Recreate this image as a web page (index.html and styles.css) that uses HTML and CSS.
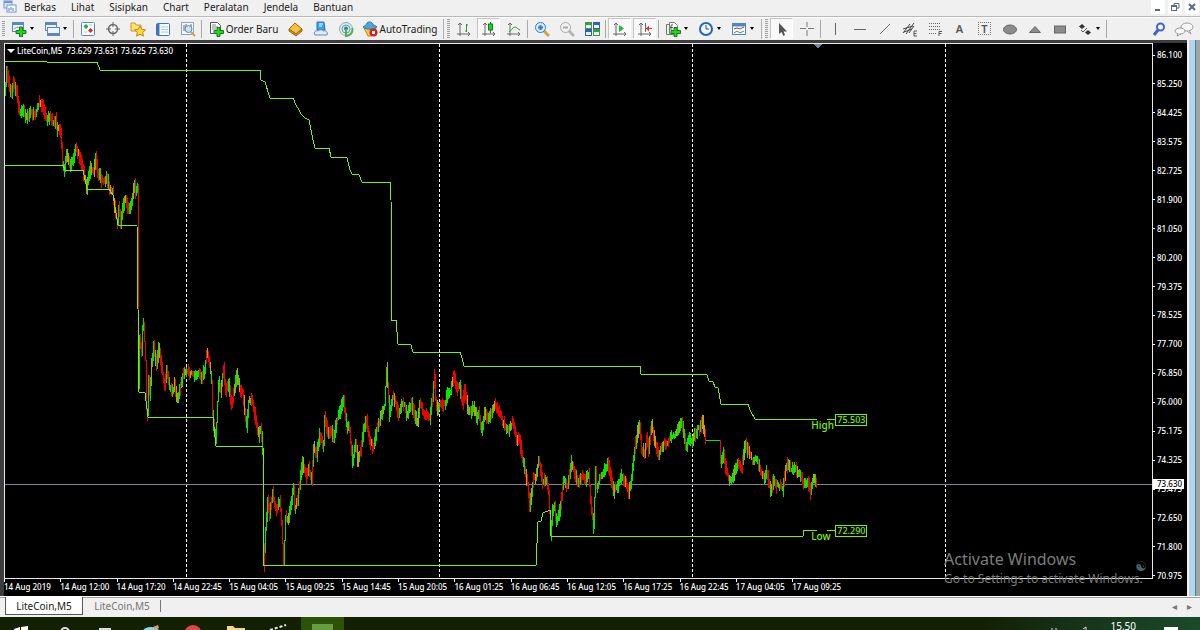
FILE: index.html
```
<!DOCTYPE html>
<html lang="id">
<head>
    <meta charset="UTF-8">
    <meta name="viewport" content="width=device-width, initial-scale=1.0">
    <title>LiteCoin,M5</title>
    <link rel="stylesheet" href="styles.css">
</head>
<body>
    <nav class="menubar">
        <svg class="app-icon" viewBox="0 0 14 14"><rect x="1" y="1" width="8" height="7" fill="#dbe8fb" stroke="#6d95d6"/><path d="M1 2h8" stroke="#6d95d6" stroke-width="2"/><rect x="4" y="5" width="9" height="7" fill="#fff" stroke="#6d95d6"/><path d="M6 11V8M8 10V7M10 11V8" stroke="#4b7bd0"/></svg>
        <button>Berkas</button>
        <button>Lihat</button>
        <button>Sisipkan</button>
        <button>Chart</button>
        <button>Peralatan</button>
        <button>Jendela</button>
        <button>Bantuan</button>
        <div class="window-buttons">
            <button aria-label="Minimize"><svg viewBox="0 0 10 10"><path d="M2 8h5" stroke="#5a6b85" stroke-width="2"/></svg></button>
            <button aria-label="Restore"><svg viewBox="0 0 10 10"><path d="M4 3V1.500h5V6H7" fill="none" stroke="#5a6b85"/><rect x="1.500" y="4" width="5" height="4.500" fill="none" stroke="#5a6b85"/><path d="M1 4h6" stroke="#5a6b85" stroke-width="2"/></svg></button>
            <button aria-label="Close"><svg viewBox="0 0 10 10"><path d="M2 2l6 6M8 2L2 8" stroke="#5a6b85" stroke-width="2"/></svg></button>
        </div>
    </nav>

    <div class="toolbar">
        <span class="grip"></span>
        <button class="tool drop" aria-label="New chart"><svg viewBox="0 0 16 16"><rect x="1.500" y="1.500" width="11" height="9" fill="#eef5fd" stroke="#5b87bb"/><path d="M1 3h12" stroke="#5b87bb" stroke-width="2"/><path d="M3 8l3-2 2 1" fill="none" stroke="#7aa"/><path d="M8.500 9.500V6h3v3.500H15v3h-3.500V16h-3v-3.500H5v-3z" fill="#25d02b" stroke="#0b8412"/></svg></button>
        <button class="tool drop" aria-label="Profiles"><svg viewBox="0 0 16 16"><rect x="1.500" y="1.500" width="11" height="8" fill="#eef5fd" stroke="#5b87bb"/><path d="M1 3h12" stroke="#5b87bb" stroke-width="2"/><rect x="3.500" y="6.500" width="12" height="8" fill="#eef5fd" stroke="#5b87bb"/><path d="M4 13h11" stroke="#5b87bb" stroke-width="2"/></svg></button>
        <span class="sep"></span>
        <button class="tool" aria-label="Market watch"><svg viewBox="0 0 16 16"><rect x="1.500" y="1.500" width="13" height="13" rx="1" fill="#fff" stroke="#4e8bd0"/><path d="M6 3l2.500 2.500L6 8 3.500 5.500z" fill="#1bab3b"/><path d="M10.500 7l2.500 2.500-2.500 2.500L8 9.500z" fill="#e02b20"/><path d="M4 11h3M9 4h3" stroke="#bbb"/></svg></button>
        <button class="tool" aria-label="Data window"><svg viewBox="0 0 16 16"><circle cx="8" cy="8" r="4.500" fill="none" stroke="#666" stroke-width="1.500"/><path d="M8 1v5M8 10v5M1 8h5M10 8h5" stroke="#666"/></svg></button>
        <button class="tool" aria-label="Navigator"><svg viewBox="0 0 16 16"><path d="M1 2h4l1 2h5v6H1z" fill="#ffe37c" stroke="#c79a22"/><path d="M10 5l1.700 3.300 3.800.500-2.800 2.600.700 3.700L10 13.300l-3.400 1.800.700-3.700-2.800-2.600 3.800-.500z" fill="#ffd83a" stroke="#b98616"/></svg></button>
        <button class="tool" aria-label="Terminal"><svg viewBox="0 0 16 16"><rect x="1.500" y="2.500" width="13" height="12" rx="1" fill="#fff" stroke="#3b76b5"/><path d="M3 3v11" stroke="#3b76b5" stroke-width="3"/><path d="M6 6h7M6 8.500h7M6 11h7" stroke="#a9c4e6"/></svg></button>
        <button class="tool" aria-label="Strategy tester"><svg viewBox="0 0 16 16"><rect x="1.500" y="1.500" width="12" height="12" fill="#f6f9fd" stroke="#8aa6c4"/><path d="M4 4v6M6 3v6M11 3v5" stroke="#668"/><circle cx="8.500" cy="8" r="3.500" fill="#c9e2f8" stroke="#5e88b6"/><path d="M11 11l4 4" stroke="#dba23a" stroke-width="2"/></svg></button>
        <span class="sep"></span>
        <button class="tool wide"><svg viewBox="0 0 16 16"><path d="M2.500 1.500h7l3 3v8h-10z" fill="#fff" stroke="#555"/><path d="M4 4h4M4 6h6M4 8h4" stroke="#888"/><path d="M9 9.500V6.500h3v3h3.500v3H12V15.500H9v-3H6v-3z" fill="#25d02b" stroke="#0b8412"/></svg>Order Baru</button>
        <button class="tool" aria-label="MetaEditor"><svg viewBox="0 0 16 16"><path d="M1 8l6-6 7 6-6 5z" fill="#f3c240" stroke="#a06a10"/><path d="M1 8v2l7 5 6-5V8l-6 5z" fill="#d58c22" stroke="#a06a10"/></svg></button>
        <button class="tool" aria-label="Options"><svg viewBox="0 0 16 16"><path d="M4 1h7l1 8H4z" fill="#3ba0ea" stroke="#1f78c0"/><path d="M6 3h4M6 5h3" stroke="#fff"/><path d="M2 14c-2-3 1-5 3-4 2-2 5-1 5 0 3-1 5 1 4 4z" fill="#e3edf8" stroke="#6488b5"/></svg></button>
        <button class="tool" aria-label="Signals"><svg viewBox="0 0 16 16"><circle cx="8" cy="8" r="6.500" fill="#dceee4" stroke="#8fa9b0"/><circle cx="8" cy="8" r="4" fill="none" stroke="#5d9ac0"/><circle cx="8" cy="7.500" r="2" fill="#3577b2"/><path d="M8 8v7c4 0 7-3 6.500-8" fill="none" stroke="#4caf50" stroke-width="2"/></svg></button>
        <button class="tool wide auto"><svg viewBox="0 0 16 16"><path d="M2 7h12l-4 8H6z" fill="#f7c93c" stroke="#b98616"/><path d="M1 6c2-2 3-1 4-4 2-2 5-1 6 1 0 2 3 1 4 3-4 3-10 3-14 0z" fill="#4ba5da" stroke="#2b78aa"/><circle cx="11.500" cy="11.500" r="4" fill="#df1d1d"/><rect x="10" y="10" width="3" height="3" fill="#fff"/></svg>AutoTrading</button>
        <span class="grip after"></span>
        <button class="tool" aria-label="Bar chart"><svg viewBox="0 0 16 16"><path d="M4 2v13M1 13h13M2 4l2-2 2 2M12 11l2 2-2 2" fill="none" stroke="#666"/><path d="M10.500 3v8M10.500 4H12M9 10h1.500" stroke="#2a9a35"/></svg></button>
        <button class="tool pressed" aria-label="Candlesticks"><svg viewBox="0 0 16 16"><path d="M4 2v13M1 13h13M2 4l2-2 2 2M12 11l2 2-2 2" fill="none" stroke="#666"/><path d="M9.500 1v11" stroke="#0b8412"/><rect x="7.500" y="3" width="4" height="6" fill="#25d02b" stroke="#0b8412"/></svg></button>
        <button class="tool" aria-label="Line chart"><svg viewBox="0 0 16 16"><path d="M4 2v13M1 13h13M2 4l2-2 2 2M12 11l2 2-2 2" fill="none" stroke="#666"/><path d="M3 11c2-1 4-5 6-5s2 2 5 3" fill="none" stroke="#2a9a35"/></svg></button>
        <span class="sep"></span>
        <button class="tool" aria-label="Zoom in"><svg viewBox="0 0 16 16"><path d="M10 10l5 5" stroke="#d9a334" stroke-width="3"/><circle cx="6.500" cy="6.500" r="5" fill="#d8ecfc" stroke="#2f78c4"/><path d="M6.500 4v5M4 6.500h5" stroke="#2f78c4" stroke-width="2"/></svg></button>
        <button class="tool" aria-label="Zoom out"><svg viewBox="0 0 16 16"><path d="M10 10l5 5" stroke="#b5b5b5" stroke-width="3"/><circle cx="6.500" cy="6.500" r="5" fill="#f2f2f2" stroke="#a9a9a9"/><path d="M4 6.500h5" stroke="#a9a9a9" stroke-width="2"/></svg></button>
        <button class="tool" aria-label="Tile windows"><svg viewBox="0 0 16 16"><path d="M1 1h7v7H1zM9 8h7v7H9z" fill="#3f9a35"/><path d="M9 1h7v7H9zM1 8h7v7H1z" fill="#2f62b5"/><path d="M2 4h5v3H2zM10 4h5v3h-5zM2 11h5v3H2zM10 11h5v3h-5z" fill="#edf5fb"/></svg></button>
        <span class="sep"></span>
        <button class="tool pressed" aria-label="Auto scroll"><svg viewBox="0 0 16 16"><path d="M4 2v13M1 13h13M2 4l2-2 2 2M12 11l2 2-2 2" fill="none" stroke="#666"/><path d="M7 4l5 3.500L7 11z" fill="#28b432"/></svg></button>
        <button class="tool pressed" aria-label="Chart shift"><svg viewBox="0 0 16 16"><path d="M4 2v13M1 13h13M2 4l2-2 2 2M12 11l2 2-2 2M8.500 2v9" fill="none" stroke="#666"/><path d="M9 7.500h6" stroke="#d33a12"/><path d="M12 4.500v6l-3-3z" fill="#d33a12"/></svg></button>
        <span class="sep"></span>
        <button class="tool drop" aria-label="Indicators"><svg viewBox="0 0 16 16"><path d="M1.500 3.500h7v10h-7z" fill="#eee" stroke="#777"/><path d="M4.500 1.500h5l3 3v8h-8z" fill="#fff" stroke="#777"/><path d="M6 9V5q0-2 2-1M5 6.500h3" fill="none" stroke="#555"/><path d="M9 9.500V6.500h3v3h3.500v3H12V15.500H9v-3H6v-3z" fill="#25d02b" stroke="#0b8412"/></svg></button>
        <button class="tool drop" aria-label="Periods"><svg viewBox="0 0 16 16"><circle cx="8" cy="8" r="6" fill="#f4f9ff" stroke="#1f69bd" stroke-width="2"/><path d="M8 4v4h3" fill="none" stroke="#444"/></svg></button>
        <button class="tool drop" aria-label="Templates"><svg viewBox="0 0 16 16"><rect x="1.500" y="2.500" width="13" height="11" fill="#fff" stroke="#4e86c5"/><path d="M1 4h14" stroke="#4e86c5" stroke-width="3"/><path d="M3 8l3-1 3 1 4-2" fill="none" stroke="#b33"/><path d="M3 12l3-2 3 2 4-2" fill="none" stroke="#3a9a4a"/></svg></button>
        <span class="grip after"></span>
        <button class="tool pressed" aria-label="Cursor"><svg viewBox="0 0 16 16"><path d="M5 2v11l2.500-2 2 4 1.500-1-1.500-3.500H13z" fill="#555"/></svg></button>
        <button class="tool" aria-label="Crosshair"><svg viewBox="0 0 16 16"><path d="M8 1v5M8 9v6M1 7.500h6M9 7.500h6" stroke="#777"/></svg></button>
        <span class="sep"></span>
        <button class="tool" aria-label="Vertical line"><svg viewBox="0 0 16 16"><path d="M8.500 2v12" stroke="#666"/></svg></button>
        <button class="tool" aria-label="Horizontal line"><svg viewBox="0 0 16 16"><path d="M2 8.500h12" stroke="#666"/></svg></button>
        <button class="tool" aria-label="Trendline"><svg viewBox="0 0 16 16"><path d="M3 13L13 3" stroke="#666"/></svg></button>
        <button class="tool" aria-label="Equidistant channel"><svg viewBox="0 0 16 16"><path d="M1 12L8 3M4 13l8-11M7 12l5-7M1 8l10-3M2 11l8-3" stroke="#444"/><path d="M15 10h-3v5h3M12 12.500h2.500" fill="none" stroke="#555"/></svg></button>
        <button class="tool" aria-label="Fibonacci"><svg viewBox="0 0 16 16"><path d="M2 2.500h12M2 5.500h12M2 8.500h12M2 12.500h8" stroke="#666" stroke-dasharray="1 1"/><path d="M15 10.500h-3V15M12 12.500h2.500" fill="none" stroke="#555"/></svg></button>
        <button class="tool letter" aria-label="Text">A</button>
        <button class="tool letter boxed" aria-label="Text label"><span>T</span></button>
        <button class="tool" aria-label="Ellipse"><svg viewBox="0 0 16 16"><ellipse cx="8" cy="8.500" rx="6.500" ry="4.500" fill="#8c8c8c" stroke="#666"/></svg></button>
        <button class="tool" aria-label="Triangle"><svg viewBox="0 0 16 16"><path d="M2.500 11.500h11L8 5.500z" fill="#8c8c8c" stroke="#666"/></svg></button>
        <button class="tool" aria-label="Rectangle"><svg viewBox="0 0 16 16"><rect x="2.500" y="5" width="11" height="7" fill="#8c8c8c" stroke="#666"/></svg></button>
        <button class="tool drop" aria-label="Arrows"><svg viewBox="0 0 16 16"><path d="M5 3l3 2.500-3 2.500-3-2.500z" fill="#333"/><path d="M11 9l3 2.500-3 2.500-3-2.500z" fill="#333"/><path d="M4 9l2 2 4-4" fill="none" stroke="#555"/></svg></button>
        <span class="sep"></span>
        <div class="toolbar-right">
            <button class="tool" aria-label="Search"><svg viewBox="0 0 16 16"><path d="M7 9l-4 5" stroke="#3766d2" stroke-width="3"/><circle cx="9.500" cy="6" r="3.500" fill="#fff" stroke="#3766d2" stroke-width="2"/></svg></button>
            <button class="tool chat" aria-label="Chat"><svg viewBox="0 0 20 16"><ellipse cx="13" cy="6" rx="6" ry="4" fill="#f7f7f7" stroke="#999"/><path d="M15 9l2 4-4-3" fill="#f7f7f7" stroke="#999"/><ellipse cx="6" cy="10" rx="5" ry="3" fill="#f7f7f7" stroke="#999"/><path d="M4 12l-1 3 4-2" fill="#f7f7f7" stroke="#999"/></svg></button>
        </div>
    </div>

    <main class="chart-window">
        <div class="plot">
            <svg class="plot-lines" viewBox="5 44 1147 534" preserveAspectRatio="none">
                <g class="day-lines">
                    <path d="M186.500 44V578M439.500 44V578M692.500 44V578M945.500 44V578"/>
                </g>
                <path class="price-line" d="M5 484H1152"/>
                <path class="candles up" id="up"/>
                <path class="candles down" id="down"/>
                <path class="candles mix" id="mix"/>
                <polyline class="band" points="5,61 46,61 47,62 97,62 100,70 260,70 261,80 265,82 270,98 293,98 296,105 299,110 301,114 305,118 309,120 313,140 315,148 329,148 331,157 347,158 350,170 352,174 359,175 362,182 390,182 391,200 392,320 396,320 398,344 411,345 413,352 460,352 462,358 464,366 640,366 641,374 688,374 707,375 709,381 713,382 715,387 718,388 721,404 748,404 750,410 755,419 817,419"/>
                <polyline class="band" points="5,165 63,165 65,170 83,170 87,189 109,189 113,195 118,225 137,225 139,392 145,393 148,417 213,417 216,446 263,446 264,565 536,565 538,522 541,521 543,513 550,510 551,536 803,536 804,530 817,530"/>
                <path class="band" d="M827 419H835M827 530H835"/>
                <path d="M813 44h9l-4 4z" fill="#7585a0"/>
            </svg>
            <div class="plot-title"><span class="arrow"></span>LiteCoin,M5&nbsp; 73.629 73.631 73.625 73.630</div>
            <span class="level-name high">High</span>
            <span class="level-name low">Low</span>
            <span class="level-value high">75.503</span>
            <span class="level-value low">72.290</span>
            <div class="watermark">
                <p class="big">Activate Windows</p>
                <p>Go to Settings to activate Windows.</p>
            </div>
            <span class="badge">☯</span>
        </div>
        <ol class="price-axis">
            <li>86.100</li><li>85.250</li><li>84.425</li><li>83.575</li><li>82.725</li><li>81.900</li><li>81.050</li><li>80.200</li><li>79.375</li><li>78.525</li><li>77.700</li><li>76.850</li><li>76.000</li><li>75.175</li><li>74.325</li><li>73.475</li><li>72.650</li><li>71.800</li><li>70.975</li>
            <li class="current">73.630</li>
        </ol>
        <ol class="time-axis">
            <li>14 Aug 2019</li><li>14 Aug 12:00</li><li>14 Aug 17:20</li><li>14 Aug 22:45</li><li>15 Aug 04:05</li><li>15 Aug 09:25</li><li>15 Aug 14:45</li><li>15 Aug 20:05</li><li>16 Aug 01:25</li><li>16 Aug 06:45</li><li>16 Aug 12:05</li><li>16 Aug 17:25</li><li>16 Aug 22:45</li><li>17 Aug 04:05</li><li>17 Aug 09:25</li>
        </ol>
    </main>

    <div class="tabs">
        <button class="tab active">LiteCoin,M5</button>
        <button class="tab">LiteCoin,M5</button>
        <div class="tab-arrows"><button aria-label="Previous">◂</button><button aria-label="Next">▸</button></div>
    </div>

    <footer class="taskbar">
        <svg viewBox="0 0 43 13"><path d="M14 12l6-2v3h-6zM21 10l7-1v4h-7z" fill="#fff"/></svg>
        <svg viewBox="0 0 43 13"><circle cx="22" cy="15" r="4" fill="none" stroke="#ddd" stroke-width="2"/></svg>
        <svg viewBox="0 0 43 13"><path d="M14 13v-1h10v1" fill="none" stroke="#ddd" stroke-width="2"/></svg>
        <svg viewBox="0 0 43 13"><ellipse cx="22" cy="14" rx="8" ry="4" fill="#8fd3ea"/><path d="M24 10l5-2 1 3-4 2z" fill="#d9a066"/></svg>
        <svg viewBox="0 0 43 13"><circle cx="21" cy="17" r="9" fill="#dc4a3d"/></svg>
        <svg viewBox="0 0 43 13"><path d="M12 9h6l2 2h10v2H12z" fill="#f6d77a"/></svg>
        <svg viewBox="0 0 43 13"><path d="M12 13l16-5" stroke="#eee" stroke-width="2" stroke-dasharray="3 2"/></svg>
        <svg class="running" viewBox="0 0 43 13"><rect x="11" y="7" width="21" height="6" fill="#679c43"/></svg>
        <div class="tray">
            <svg viewBox="0 0 60 13"><path d="M2 13v-2M6 13v-2M33 12l3-2v3" stroke="#ddd" fill="none"/></svg>
            <span>15.50</span>
            <i class="note"></i>
        </div>
    </footer>

    <script>
        // swing points of the price, x then y
        const swings = '5,92 7,71 10,88 12,91 14,82 17,92 20,112 24,110 27,118 30,112 33,115 36,112 40,101 43,106 47,119 50,116 53,122 56,120 58,130 60,126 62,142 63,165 65,169 67,153 70,165 73,160 76,148 80,156 83,168 87,187 91,167 94,172 96,158 98,172 101,178 104,183 107,176 110,190 113,193 115,207 118,224 119,205 121,222 123,208 126,198 129,210 132,202 135,182 136,195 138,184 139,388 140,335 142,355 143,325 144,322 146,360 147,410 148,415 149,375 150,395 152,365 154,346 157,365 159,347 161,358 165,388 167,368 170,385 172,392 175,385 178,400 180,390 183,375 187,370 190,373 195,375 199,371 202,378 205,370 207,352 209,358 212,380 213,415 216,443 219,380 221,392 224,369 226,390 229,383 232,405 237,374 240,388 243,392 247,427 249,400 253,402 256,420 259,435 261,427 263,450 264,565 266,530 268,500 270,515 273,492 276,510 280,500 282,520 284,565 286,515 288,520 291,505 294,485 295,510 298,500 301,475 303,463 307,476 309,468 312,480 314,445 317,455 320,435 324,445 325,415 328,432 332,430 334,440 337,420 340,412 344,400 347,425 350,430 353,462 356,440 358,460 361,450 364,430 367,420 370,440 374,447 377,430 380,420 383,410 385,405 387,367 390,415 393,395 396,402 399,415 402,405 405,405 407,415 412,402 415,415 418,422 420,402 423,410 427,415 430,418 433,395 435,374 436,400 438,408 441,402 445,405 448,393 451,392 454,375 457,388 460,385 463,402 465,388 468,408 471,412 474,405 477,418 479,412 482,432 485,410 488,420 492,412 495,403 500,413 505,426 509,430 513,421 517,438 520,440 523,460 526,475 528,483 530,508 532,490 534,478 537,475 539,459 541,470 543,483 547,478 549,490 551,535 553,510 555,507 557,523 560,510 562,495 564,480 568,485 570,473 572,462 575,475 579,483 583,475 586,480 589,472 591,500 594,528 596,466 597,488 600,478 605,470 608,462 611,475 614,490 618,485 622,475 625,480 629,492 632,478 634,455 638,430 640,424 642,448 645,455 647,437 649,450 652,423 655,440 659,455 664,443 668,442 672,435 675,435 678,428 682,422 686,445 689,440 693,440 697,430 701,427 703,420 706,440 720,440 721,463 724,455 727,472 731,482 734,475 738,462 742,467 746,443 749,452 753,460 757,458 761,470 764,478 767,471 771,493 774,478 777,485 780,485 783,488 786,470 788,463 791,468 796,468 798,475 801,474 804,485 808,480 811,492 814,477 817,486'
            .split(' ').map(p => p.split(',').map(Number));

        const paths = { up: '', down: '', mix: '' };
        let seed = 7;
        function random() {
            seed = (seed * 16807) % 2147483647;
            return seed / 2147483647;
        }

        for (let i = 1; i < swings.length; i++) {
            const [x0, y0] = swings[i - 1];
            const [x1, y1] = swings[i];
            for (let x = x0; x < x1; x++) {
                const open = y0 + (y1 - y0) * (x - x0) / (x1 - x0);
                const close = y0 + (y1 - y0) * (x + 1 - x0) / (x1 - x0);
                const flat = x0 === 706;
                const steep = Math.abs(close - open) > 18;
                const wick = flat || steep ? 0 : 3 + random() * 9;
                const shift = flat || steep ? 0 : random() * 4 - 2;
                const high = Math.round(Math.min(open, close) - wick / 2 + shift);
                const low = Math.round(Math.max(open, close) + wick / 2 + shift) + 1;
                let kind = close <= open ? 'up' : 'down';
                if (!flat && !steep) {
                    if (random() < 0.2) kind = kind === 'up' ? 'down' : 'up';
                    if (random() < 0.12) kind = 'mix';
                }
                paths[kind] += `M${x + 0.5} ${high}V${low}`;
            }
        }

        for (const kind in paths) {
            document.getElementById(kind).setAttribute('d', paths[kind]);
        }
    </script>
</body>
</html>
```
FILE: styles.css
```
/* Base styles */
* {
    box-sizing: border-box;
}

body {
    margin: 0;
    height: 100vh;
    display: flex;
    flex-direction: column;
    overflow: hidden;
    background: #f0f0f0;
    color: #1a1a1a;
    font-family: "Noto Sans", "Open Sans", sans-serif;
    font-size: 10px;
}

button {
    border: 0;
    padding: 0;
    background: none;
    color: inherit;
    font: inherit;
}

ol, p {
    list-style: none;
    margin: 0;
    padding: 0;
}

/* Menu bar */
.menubar {
    display: flex;
    align-items: flex-start;
    gap: 15px;
    height: 17px;
    padding-left: 3px;
    border-bottom: 1px solid #b8b8b8;
    line-height: 14px;
}

.app-icon {
    width: 14px;
    height: 14px;
    margin-right: -8px;
}

.window-buttons {
    display: flex;
    gap: 3px;
    margin-left: auto;
    padding-right: 1px;
}

.window-buttons button {
    width: 14px;
    height: 14px;
    background: #fff;
    display: grid;
    place-items: center;
}

.window-buttons svg {
    width: 10px;
    height: 10px;
}

/* Toolbar */
.toolbar {
    display: flex;
    align-items: center;
    height: 23px;
    border-top: 1px solid #fff;
    padding-bottom: 1px;
}

.grip {
    width: 3px;
    height: 16px;
    margin: 0 1px 0 2px;
    background: repeating-linear-gradient(#a0a0a0 0 1px, #f0f0f0 1px 2px);
}

.grip.after {
    width: 7px;
    height: 20px;
    border-left: 1px solid #b0b0b0;
    padding-left: 3px;
    background-clip: content-box;
}

.sep {
    width: 1px;
    height: 18px;
    margin: 0 1px;
    background: #a8a8a8;
}

.tool {
    display: flex;
    align-items: center;
    justify-content: center;
    width: 25px;
    height: 21px;
    flex: none;
}

.tool svg {
    width: 16px;
    height: 16px;
    flex: none;
}

.tool.drop {
    width: 33px;
    gap: 3px;
}

.tool.drop::after {
    content: "";
    border: 2px solid transparent;
    border-top: 3px solid #000;
    border-bottom: 0;
}

.tool.wide {
    width: 80px;
    gap: 2px;
    white-space: nowrap;
}

.tool.auto {
    width: 83px;
}

.tool.pressed {
    width: 23px;
    margin: 0 1px;
    background: #f9f9f9;
    border: 1px solid #c4c4c4;
    border-right-color: #fff;
    border-bottom-color: #fff;
}

.tool.letter {
    color: #555;
    font-size: 11px;
    font-weight: 600;
}

.tool.boxed span {
    width: 11px;
    line-height: 11px;
    outline: 1px dotted #777;
}

.toolbar-right {
    display: flex;
    margin-left: auto;
    padding-right: 4px;
}

.tool.chat svg {
    width: 20px;
}

/* Chart window */
.chart-window {
    flex: 1;
    min-height: 0;
    display: grid;
    grid-template-columns: 1fr 34px;
    grid-template-rows: 1fr 17px;
    position: relative;
    margin-right: 13px;
    border: solid #3c3c3c;
    border-width: 3px 0 0 4px;
    background: #000;
    color: #fff;
    font-size: 8px;
    font-weight: 500;
    box-shadow: 2px 0 #f4f4f4, 8px 0 #b9d1ea, 9px 0 #1b93a8, 13px 0 #a3a3a3;
}

.plot {
    position: relative;
    border: 1px solid #e8e8e8;
    min-height: 0;
}

.plot-lines {
    display: block;
    position: absolute;
    width: 100%;
    height: 100%;
    shape-rendering: crispEdges;
}

.plot-lines path, .plot-lines polyline {
    vector-effect: non-scaling-stroke;
}

.day-lines path {
    stroke: #fff;
    stroke-dasharray: 3 2;
}

.price-line {
    stroke: #77879b;
}

.band {
    fill: none;
    stroke: #80f000;
}

.candles {
    fill: none;
}

.up {
    stroke: #00e800;
}

.down {
    stroke: #f00000;
}

.mix {
    stroke: #c8a000;
}

.plot-title {
    position: absolute;
    top: 1px;
    left: 2px;
    display: flex;
    align-items: center;
    gap: 2px;
    line-height: 12px;
    white-space: nowrap;
}

.arrow {
    border: 4px solid transparent;
    border-top: 4px solid #fff;
    border-bottom: 0;
}

.level-name, .level-value {
    position: absolute;
    color: #80f000;
    line-height: 10px;
}

.level-name {
    right: 27.700%;
    width: 23px;
    font-size: 10px;
}

.level-value {
    left: 72.400%;
    width: 32px;
    height: 12px;
    border: 1px solid #80f000;
    font-size: 9px;
    text-align: center;
}

.level-name.high {
    top: 70.500%;
}

.level-name.low {
    top: 91.200%;
}

.level-value.high {
    top: 69.300%;
}

.level-value.low {
    top: 90%;
}

.watermark {
    position: absolute;
    right: 3px;
    bottom: -9px;
    z-index: 1;
    width: 205px;
    color: #7c7c7c;
    font-size: 12px;
    font-weight: 400;
    line-height: 16px;
    white-space: nowrap;
}

.watermark .big {
    font-size: 16px;
    line-height: 24px;
}

.badge {
    position: absolute;
    right: 5px;
    bottom: 5px;
    color: #41666c;
    font-family: "DejaVu Sans", sans-serif;
    font-size: 13px;
    line-height: 13px;
}

/* Axes */
.price-axis {
    grid-column: 2;
    grid-row: 1 / 3;
    position: relative;
    display: flex;
    flex-direction: column;
    justify-content: space-between;
    padding: 7px 0 15px;
    line-height: 10px;
}

.price-axis li {
    display: flex;
    align-items: center;
    gap: 2px;
}

.price-axis li::before {
    content: "";
    width: 2px;
    height: 1px;
    background: #fff;
}

.price-axis .current {
    position: absolute;
    top: 78.800%;
    left: 0;
    width: 31px;
    background: #fff;
    color: #000;
}

.time-axis {
    display: flex;
    line-height: 15px;
}

.time-axis li {
    position: relative;
    flex: 0 0 4.900%;
    white-space: nowrap;
}

.time-axis li::before {
    content: "";
    position: absolute;
    left: 0;
    width: 1px;
    height: 3px;
    background: #fff;
}

/* Chart tabs */
.tabs {
    display: flex;
    height: 21px;
    padding: 0 8px 2px 5px;
    border-top: 1px solid #fff;
    box-shadow: inset 0 1px #a0a0a0;
}

.tab {
    width: 78px;
    height: 18px;
    color: #777;
    background: linear-gradient(#777, #777) right center / 1px 12px no-repeat;
}

.tab.active {
    background: #fff;
    color: #1a1a1a;
    border: 1px solid #555;
    border-top: 0;
}

.tab-arrows {
    display: flex;
    gap: 10px;
    margin-left: auto;
    color: #777;
}

/* Windows taskbar */
.taskbar {
    display: flex;
    height: 13px;
    overflow: hidden;
    background: linear-gradient(90deg, #132003 82%, #16341a 90%, #1b4a2a);
    color: #fff;
}

.taskbar svg {
    width: 43px;
    height: 13px;
}

.taskbar .running {
    background: #2c5208;
}

.tray {
    display: flex;
    margin-left: auto;
    padding-right: 22px;
    line-height: 18px;
}

.tray svg {
    width: 60px;
}

.note {
    width: 14px;
    height: 3px;
    margin: 10px 0 0 28px;
    background: #fff;
}
```
